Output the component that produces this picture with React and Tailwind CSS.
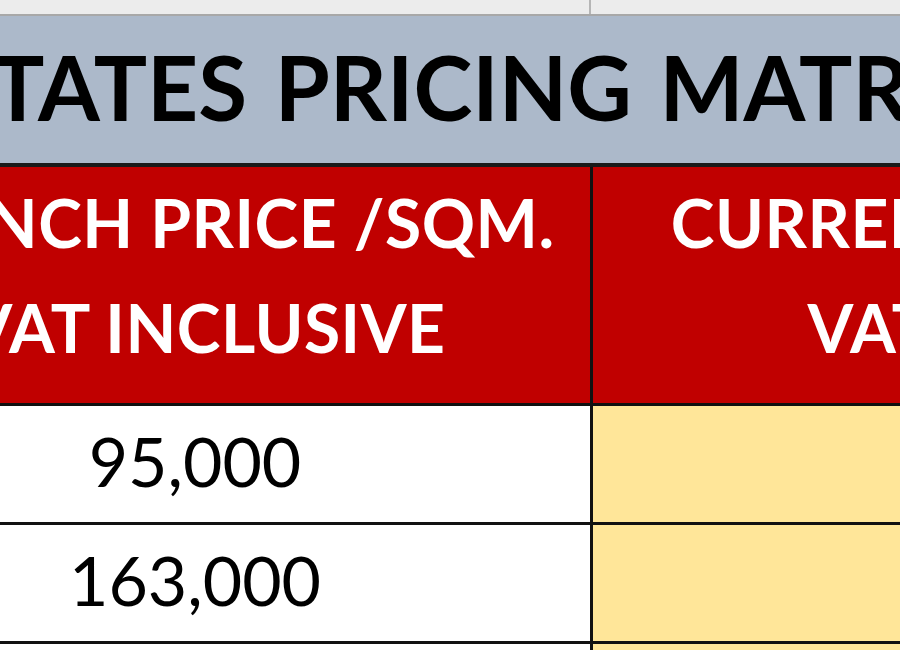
export default function App() {
  const font = { fontFamily: "Lato, 'Open Sans', sans-serif" };
  return (
    <div className="w-[900px] h-[650px] overflow-hidden bg-white" style={font}>
      {/* top strip */}
      <div className="flex h-[14px] bg-[#ececec]">
        <div className="w-[591px] border-r-2 border-[#b5b5b5]" />
        <div className="flex-1" />
      </div>
      <div className="h-[2px] bg-[#a8a8a8]" />
      {/* title band */}
      <div className="h-[147px] bg-[#acb9ca] overflow-hidden flex">
        <div className="shrink-0 ml-[-109px] pt-[26px] whitespace-nowrap text-[89px] font-bold leading-none text-black [word-spacing:6px]">
          ESTATES PRICING MATRIX
        </div>
      </div>
      <div className="h-[4px] bg-[#1a1a1a]" />
      {/* header + rows */}
      <div className="ml-[-200px] w-[1700px]">
        <div className="flex h-[236px] bg-[#c00000]">
          <div className="w-[790px] shrink-0 flex flex-col items-center pl-[22px] pt-[3px] text-white font-bold text-[66px] leading-[105px] tracking-[0.5px] whitespace-nowrap">
            <div>LAUNCH PRICE /SQM.</div>
            <div>VAT INCLUSIVE</div>
          </div>
          <div className="w-[3px] shrink-0 bg-[#111]" />
          <div className="w-[886px] shrink-0 flex flex-col items-center pl-[22px] pt-[3px] text-white font-bold text-[66px] leading-[105px] tracking-[0.5px] whitespace-nowrap">
            <div className="[word-spacing:12px]">CURRENT PRICE /SQM.</div>
            <div>VAT INCLUSIVE</div>
          </div>
        </div>
        <div className="h-[3px] bg-[#111]" />
        {["95,000", "163,000"].map((v) => (
          <div key={v}>
            <div className="flex h-[116px]">
              <div className="w-[790px] shrink-0 flex items-center justify-center pb-[6px] text-[68px] leading-none text-black">
                {v}
              </div>
              <div className="w-[3px] shrink-0 bg-[#111]" />
              <div className="w-[886px] shrink-0 bg-[#ffe699]" />
            </div>
            <div className="h-[3px] bg-[#111]" />
          </div>
        ))}
        <div className="flex h-[40px]">
          <div className="w-[790px] shrink-0" />
          <div className="w-[3px] shrink-0 bg-[#111]" />
          <div className="w-[886px] shrink-0 bg-[#ffe699]" />
        </div>
      </div>
    </div>
  );
}
